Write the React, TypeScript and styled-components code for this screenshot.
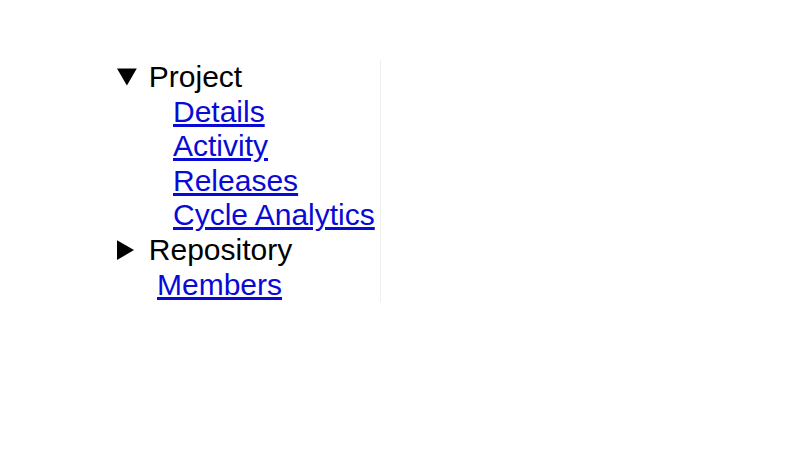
import React from "react";
import styled, { createGlobalStyle } from "styled-components";

const GlobalStyle = createGlobalStyle`
  html, body {
    margin: 0;
    padding: 0;
    background: #ffffff;
  }
  body {
    font-family: "Liberation Sans", Arial, sans-serif;
  }
`;

const Page = styled.div`
  display: flex;
  padding: 60px 0 0 115px;
`;

const Sidebar = styled.nav`
  display: flex;
  flex-direction: column;
  padding-left: 2px;
  padding-right: 5px;
  border-right: 1px solid #eeeeee;
  font-size: 30px;
  line-height: 34.6px;
  color: #000000;
`;

const Group = styled.details`
  margin: 0;
`;

const Summary = styled.summary`
  cursor: pointer;
  outline: none;
`;

const LinkList = styled.div<{ $indent: number }>`
  display: flex;
  flex-direction: column;
  align-items: flex-start;
  padding-left: ${(p) => p.$indent}px;
`;

const NavLink = styled.a`
  color: #0a0ad6;
  text-decoration: underline;
  white-space: nowrap;
`;

export default function App() {
  return (
    <>
      <GlobalStyle />
      <Page>
        <Sidebar>
          <Group open>
            <Summary>Project</Summary>
            <LinkList $indent={56}>
              <NavLink href="#details">Details</NavLink>
              <NavLink href="#activity">Activity</NavLink>
              <NavLink href="#releases">Releases</NavLink>
              <NavLink href="#cycle-analytics">Cycle Analytics</NavLink>
            </LinkList>
          </Group>
          <Group>
            <Summary>Repository</Summary>
          </Group>
          <LinkList $indent={40}>
            <NavLink href="#members">Members</NavLink>
          </LinkList>
        </Sidebar>
      </Page>
    </>
  );
}
